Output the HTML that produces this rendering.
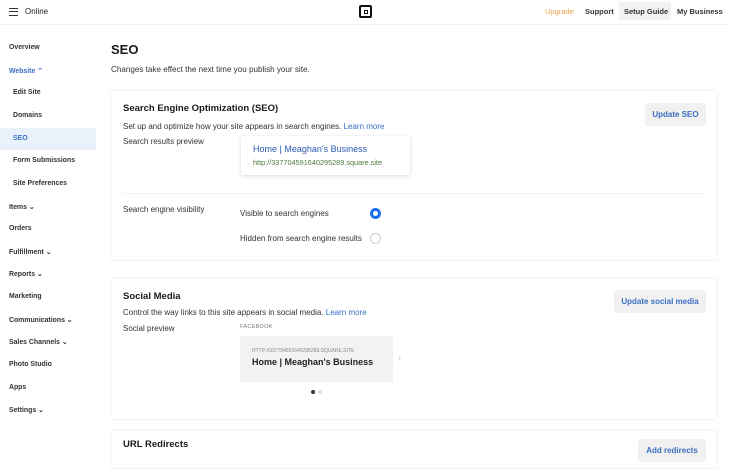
<!DOCTYPE html><html><head><style>
*{margin:0;padding:0;box-sizing:border-box}
body{width:730px;height:456px;overflow:hidden;background:#fff;font-family:"Liberation Sans",sans-serif;color:#1a1a1a;position:relative}
.a{position:absolute;white-space:nowrap}
.nav{font-size:6.9px;font-weight:bold;color:#333}
.b{font-weight:bold}
.card{position:absolute;left:110px;width:608px;border:1px solid #f3f3f3;border-radius:3px}
.btn{position:absolute;background:#f1f1f1;border-radius:3px;color:#3a6fc4;font-weight:bold;font-size:8px;text-align:center}
</style></head><body>
<div class="a" style="left:0;top:24px;width:730px;height:1px;background:#f0f0f0"></div>
<div class="a" style="left:9px;top:8px;width:9px;height:8px;border-top:1.3px solid #333;border-bottom:1.3px solid #333"><div style="margin-top:2.2px;height:1.3px;background:#333"></div></div>
<div class="a" style="left:25px;top:7px;font-size:8px;color:#222">Online</div>
<div class="a" style="left:359px;top:5px;width:13px;height:13px;border:2px solid #111;border-radius:2px"><div style="margin:2.5px;width:4px;height:4px;border:1.5px solid #111"></div></div>
<div class="a" style="left:545px;top:7px;font-size:7.5px;color:#e8a34a">Upgrade</div>
<div class="a" style="left:585px;top:7px;font-size:7.5px;color:#333;font-weight:bold">Support</div>
<div class="a" style="left:619px;top:2px;width:52px;height:18px;background:#f2f2f2;border-radius:2px"></div>
<div class="a" style="left:624px;top:7px;font-size:7.5px;color:#333;font-weight:bold">Setup Guide</div>
<div class="a" style="left:677px;top:7px;font-size:7.5px;color:#333;font-weight:bold">My Business</div>

<div class="a" style="left:0;top:128px;width:96px;height:22px;background:#e9f1fb"></div>
<div class="a nav" style="left:9px;top:44px">Overview</div>
<div class="a nav" style="left:9px;top:67px;color:#3a6fc4">Website ⌃</div>
<div class="a nav" style="left:13px;top:89px">Edit Site</div>
<div class="a nav" style="left:13px;top:112px">Domains</div>
<div class="a nav" style="left:13px;top:135px;color:#3a6fc4">SEO</div>
<div class="a nav" style="left:13px;top:157px">Form Submissions</div>
<div class="a nav" style="left:13px;top:180px">Site Preferences</div>
<div class="a nav" style="left:9px;top:203px">Items ⌄</div>
<div class="a nav" style="left:9px;top:225px">Orders</div>
<div class="a nav" style="left:9px;top:248px">Fulfillment ⌄</div>
<div class="a nav" style="left:9px;top:270px">Reports ⌄</div>
<div class="a nav" style="left:9px;top:293px">Marketing</div>
<div class="a nav" style="left:9px;top:316px">Communications ⌄</div>
<div class="a nav" style="left:9px;top:338px">Sales Channels ⌄</div>
<div class="a nav" style="left:9px;top:361px">Photo Studio</div>
<div class="a nav" style="left:9px;top:384px">Apps</div>
<div class="a nav" style="left:9px;top:406px">Settings ⌄</div>

<div class="a" style="left:111px;top:42px;font-size:13px;font-weight:bold">SEO</div>
<div class="a" style="left:111px;top:65px;font-size:8.1px;color:#333">Changes take effect the next time you publish your site.</div>

<div class="card" style="top:90px;height:171px"></div>
<div class="a b" style="left:123px;top:103px;font-size:9.5px">Search Engine Optimization (SEO)</div>
<div class="a" style="left:123px;top:122px;font-size:8px;color:#333">Set up and optimize how your site appears in search engines. <span style="color:#3a6fc4">Learn more</span></div>
<div class="a" style="left:123px;top:137px;font-size:8px;color:#333">Search results preview</div>
<div class="btn" style="left:645px;top:103px;width:61px;height:23px;line-height:23px">Update SEO</div>
<div class="a" style="left:241px;top:136px;width:169px;height:39px;background:#fff;box-shadow:0 1px 4px rgba(0,0,0,.15);border-radius:2px"></div>
<div class="a" style="left:253px;top:144px;font-size:9px;color:#2b59b6">Home | Meaghan's Business</div>
<div class="a" style="left:253px;top:158px;font-size:7.3px;color:#4d7a3a">http://337704591640295289.square.site</div>
<div class="a" style="left:123px;top:193px;width:582px;height:1px;background:#f2f2f2"></div>
<div class="a" style="left:123px;top:205px;font-size:8px;color:#333">Search engine visibility</div>
<div class="a" style="left:240px;top:209px;font-size:8px;color:#333">Visible to search engines</div>
<div class="a" style="left:240px;top:234px;font-size:8px;color:#333">Hidden from search engine results</div>
<div class="a" style="left:370px;top:208px;width:11px;height:11px;border-radius:50%;border:3.3px solid #1b6ef0"></div>
<div class="a" style="left:370px;top:233px;width:11px;height:11px;border-radius:50%;border:1px solid #ccc"></div>

<div class="card" style="top:277px;height:143px"></div>
<div class="a b" style="left:123px;top:291px;font-size:9.5px">Social Media</div>
<div class="a" style="left:123px;top:308px;font-size:8px;color:#333">Control the way links to this site appears in social media. <span style="color:#3a6fc4">Learn more</span></div>
<div class="a" style="left:123px;top:324px;font-size:8px;color:#333">Social preview</div>
<div class="btn" style="left:614px;top:290px;width:92px;height:23px;line-height:23px">Update social media</div>
<div class="a" style="left:240px;top:324px;font-size:5.5px;color:#777;letter-spacing:.3px">FACEBOOK</div>
<div class="a" style="left:240px;top:336px;width:153px;height:46px;background:#f2f2f2"></div>
<div class="a" style="left:252px;top:348px;font-size:5px;color:#888">HTTP://337704591640295289.SQUARE.SITE</div>
<div class="a b" style="left:252px;top:357px;font-size:9px;color:#222">Home | Meaghan's Business</div>
<div class="a" style="left:398px;top:353px;font-size:9px;color:#bbb">›</div>
<div class="a" style="left:311px;top:390px;width:4px;height:4px;border-radius:50%;background:#333"></div>
<div class="a" style="left:318px;top:390px;width:4px;height:4px;border-radius:50%;background:#ddd"></div>

<div class="card" style="top:429px;height:40px"></div>
<div class="a b" style="left:123px;top:439px;font-size:9.5px">URL Redirects</div>
<div class="btn" style="left:638px;top:439px;width:68px;height:23px;line-height:23px">Add redirects</div>
</body></html>
